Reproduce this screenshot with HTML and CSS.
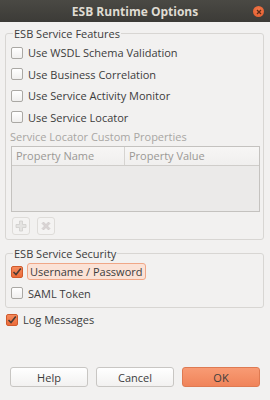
FILE: index.html
```html
<!DOCTYPE html>
<html lang="en">
<head>
    <meta charset="UTF-8">
    <title>ESB Runtime Options</title>
    <link rel="stylesheet" href="styles.css">
</head>
<body>

<div class="dialog">
    <!-- Title bar -->
    <div class="titlebar">
        <span class="title">ESB Runtime Options</span>
        <span class="close">
            <svg width="6" height="6" viewBox="0 0 6 6"><path d="M1 1L5 5M5 1L1 5" stroke="#5a2a18" stroke-width="1.3"/></svg>
        </span>
    </div>

    <div class="content">
        <fieldset class="group features">
            <legend>ESB Service Features</legend>
            <label class="check"><span class="box"></span>Use WSDL Schema Validation</label>
            <label class="check"><span class="box"></span>Use Business Correlation</label>
            <label class="check"><span class="box"></span>Use Service Activity Monitor</label>
            <label class="check"><span class="box"></span>Use Service Locator</label>

            <div class="sub-label">Service Locator Custom Properties</div>
            <div class="table">
                <div class="table-head">
                    <div class="col col-name">Property Name</div>
                    <div class="col">Property Value</div>
                </div>
                <div class="table-body"></div>
            </div>
            <div class="tools">
                <span class="tool">
                    <svg width="12" height="12" viewBox="0 0 12 12"><path d="M4.5 1h3v3.5H11v3H7.5V11h-3V7.5H1v-3h3.5z" fill="#e4e3e1" stroke="#cfcecb" stroke-width="0.8"/></svg>
                </span>
                <span class="tool">
                    <svg width="12" height="12" viewBox="0 0 12 12"><path d="M2 3.5L3.5 2 6 4.5 8.5 2 10 3.5 7.5 6 10 8.5 8.5 10 6 7.5 3.5 10 2 8.5 4.5 6z" fill="#d9d4d4" stroke="#c8c3c3" stroke-width="0.6"/></svg>
                </span>
            </div>
        </fieldset>

        <fieldset class="group security">
            <legend>ESB Service Security</legend>
            <label class="check checked"><span class="box"><svg width="10" height="10" viewBox="0 0 10 10"><path d="M1.5 5l2.5 2.5L8.8 1.6" fill="none" stroke="#4a3b35" stroke-width="1.6"/></svg></span><span class="focus">Username / Password</span></label>
            <label class="check"><span class="box"></span>SAML Token</label>
        </fieldset>

        <label class="check checked log"><span class="box"><svg width="10" height="10" viewBox="0 0 10 10"><path d="M1.5 5l2.5 2.5L8.8 1.6" fill="none" stroke="#4a3b35" stroke-width="1.6"/></svg></span>Log Messages</label>
    </div>

    <div class="buttons">
        <button class="btn">Help</button>
        <button class="btn">Cancel</button>
        <button class="btn ok">OK</button>
    </div>
</div>

</body>
</html>
```

FILE: styles.css
```css
/* Reset */
* {
    margin: 0;
    padding: 0;
    box-sizing: border-box;
}
body {
    width: 270px;
    height: 400px;
    background: #f2f1f0;
    font-family: "Open Sans", "DejaVu Sans", sans-serif;
    font-size: 11px;
    color: #3c3c3c;
    overflow: hidden;
}
.dialog {
    height: 400px;
    display: flex;
    flex-direction: column;
}

/* Title bar */
.titlebar {
    height: 22px;
    background: linear-gradient(#4a4944, #3c3b37);
    display: flex;
    align-items: center;
    justify-content: center;
    position: relative;
}
.title {
    color: #dfdbd2;
    font-weight: bold;
    font-size: 12px;
}
.close {
    position: absolute;
    right: 6px;
    top: 6px;
    width: 11px;
    height: 11px;
    border-radius: 50%;
    background: radial-gradient(circle at 50% 40%, #f47a4c, #e0592a);
    display: flex;
    align-items: center;
    justify-content: center;
}

/* Content */
.content {
    padding: 5px 6px 0 5px;
}
.group {
    border: 1px solid #d8d6d3;
    border-radius: 3px;
    padding: 0 3px 4px 5px;
    margin: 0;
}
.features {
    padding-top: 2px;
}
.group legend {
    margin-left: 2px;
    padding: 0 1px;
    line-height: 13px;
    font-size: 11px;
}
.check {
    display: flex;
    align-items: center;
    height: 21.5px;
    white-space: nowrap;
}
.box {
    width: 12px;
    height: 12px;
    border: 1px solid #aaa8a4;
    border-radius: 2px;
    background: linear-gradient(#ffffff, #f0efee);
    margin-right: 5px;
    display: flex;
    align-items: center;
    justify-content: center;
    flex: none;
}
.checked .box {
    background: linear-gradient(#f58a5c, #ec6c3a);
    border-color: #d05a2c;
}
.focus {
    margin-left: -1px;
    padding: 0 3px 0 2px;
    height: 17px;
    line-height: 16px;
    border: 1px solid #f0a787;
    border-radius: 3px;
    background: #fbe2d6;
}

/* Custom properties */
.sub-label {
    color: #a8a6a3;
    line-height: 13px;
    margin: 2px 0 3px -1px;
}
.table {
    border: 1px solid #c4c2bf;
    height: 66px;
    background: #ebeae9;
    display: flex;
    flex-direction: column;
}
.table-head {
    display: flex;
    height: 19px;
    background: linear-gradient(#f7f6f5, #f0efee);
    border-bottom: 1px solid #cfcdca;
    color: #9a9895;
    line-height: 18px;
}
.col {
    padding-left: 4px;
}
.col-name {
    width: 113px;
    border-right: 1px solid #d6d4d1;
}
.table-body {
    flex: 1;
}
.tools {
    display: flex;
    gap: 7px;
    margin-top: 5px;
    margin-left: 1px;
}
.tool {
    width: 18px;
    height: 18px;
    border: 1px solid #dedcd9;
    border-radius: 3px;
    background: #f4f3f2;
    display: flex;
    align-items: center;
    justify-content: center;
}

/* Security group */
.security {
    margin-top: 7px;
    padding-top: 1px;
    padding-bottom: 3px;
}
.log {
    margin-left: 1px;
    margin-top: 1px;
}

/* Dialog buttons */
.buttons {
    margin-top: auto;
    margin-bottom: 13px;
    display: flex;
    gap: 8px;
    padding: 0 10px;
}
.btn {
    flex: 1;
    height: 20px;
    font-family: inherit;
    font-size: 11px;
    color: #3c3c3c;
    border: 1px solid #c8c6c3;
    border-radius: 3px;
    background: linear-gradient(#ffffff, #f2f1f0);
}
.btn.ok {
    border-color: #de7a52;
    background: linear-gradient(#f89b74, #f0845a);
}
```
